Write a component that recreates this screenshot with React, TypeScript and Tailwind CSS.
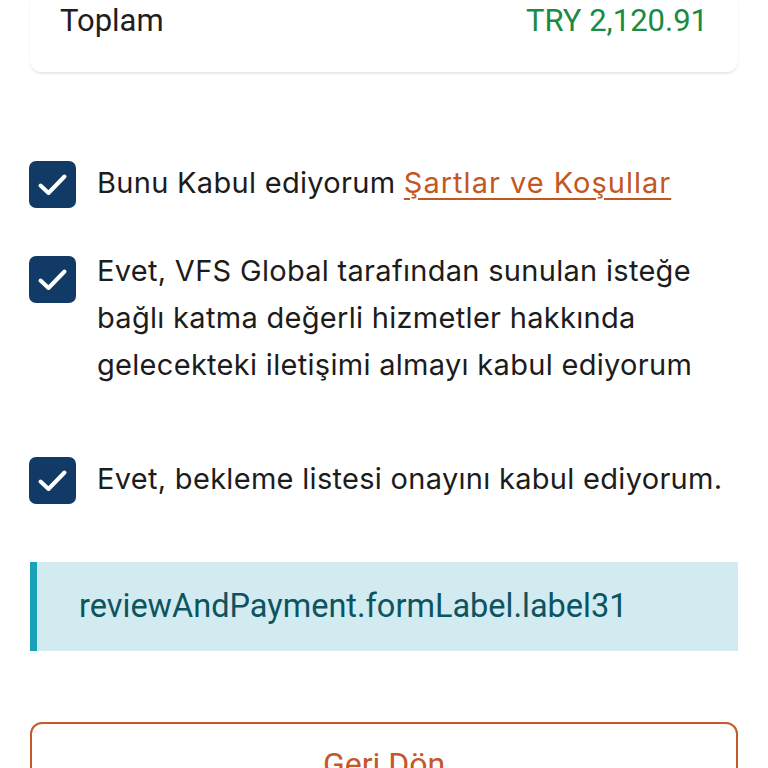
import React from "react";

const Check = () => (
  <div className="w-[47px] h-[47px] shrink-0 rounded-[7px] bg-[#113a66] flex items-center justify-center">
    <svg width="47" height="47" viewBox="0 0 47 47" fill="none">
      <path
        d="M11.5 24.5 L19.5 32 L35.5 15.5"
        stroke="white"
        strokeWidth="4"
        strokeLinecap="round"
        strokeLinejoin="round"
      />
    </svg>
  </div>
);

const App = () => {
  return (
    <div className="w-[768px] h-[768px] overflow-hidden bg-white font-['Inter','Liberation_Sans',sans-serif]">
      <div className="mx-[30px] bg-white rounded-b-[12px] shadow-[0_2px_2px_rgba(0,0,0,0.09)] h-[72px] px-[30px] flex justify-between items-start font-['Roboto',sans-serif] text-[31px] leading-[42px]">
        <span className="text-[#1e1e1e]">Toplam</span>
        <span className="text-[#1b8a42]">TRY 2,120.91</span>
      </div>

      <div className="px-[29px] text-[29px] tracking-[0.3px] text-[#1c1c1c]">
        <div className="mt-[89px] h-[47px] flex items-center gap-[21px]">
          <Check />
          <p className="leading-[47px] -mt-[4px]">
            Bunu Kabul ediyorum{" "}
            <span className="text-[#c4571f] tracking-[1px] underline underline-offset-[5px] decoration-[2px]">
              Şartlar ve Koşullar
            </span>
          </p>
        </div>

        <div className="mt-[41px] flex items-start gap-[21px]">
          <div className="mt-[7px]">
            <Check />
          </div>
          <p className="leading-[47px] -mt-[2px]">
            Evet, VFS Global tarafından sunulan isteğe
            <br />
            bağlı katma değerli hizmetler hakkında
            <br />
            gelecekteki iletişimi almayı kabul ediyorum
          </p>
        </div>

        <div className="mt-[69px] h-[47px] flex items-center gap-[21px]">
          <Check />
          <p className="leading-[47px] -mt-[4px]">Evet, bekleme listesi onayını kabul ediyorum.</p>
        </div>
      </div>

      <div className="mx-[30px] mt-[58px] h-[89px] bg-[#d1ebf1] border-l-[7px] border-[#1ba2b8] pl-[42px] flex items-center font-['Roboto',sans-serif] text-[32.5px] text-[#0e5360]">
        reviewAndPayment.formLabel.label31
      </div>

      <div className="mx-[30px] mt-[71px] h-[90px] rounded-[12px] border-2 border-[#c45a2c] flex justify-center pt-[16px] font-['Roboto',sans-serif] text-[32px] text-[#c4572b]">
        Geri Dön
      </div>
    </div>
  );
};

export default App;
